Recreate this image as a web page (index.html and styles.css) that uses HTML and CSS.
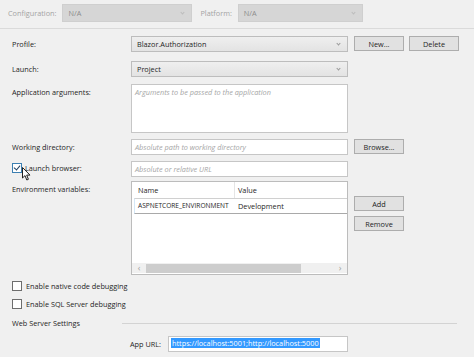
FILE: index.html
```html
<!DOCTYPE html>
<html lang="en">
<head>
    <meta charset="UTF-8">
    <title>Debug</title>
    <link rel="stylesheet" href="styles.css">
</head>
<body>
    <div class="top-bar">
        <span class="dim">Configuration:</span>
        <div class="select disabled config">N/A <span class="chev"></span></div>
        <span class="dim platform-label">Platform:</span>
        <div class="select disabled platform">N/A <span class="chev"></span></div>
    </div>
    <div class="sep"></div>

    <div class="form">
        <div class="row r-profile">
            <div class="label">Profile:</div>
            <div class="select field">Blazor.Authorization <span class="chev"></span></div>
            <button class="btn">New...</button>
            <button class="btn">Delete</button>
        </div>

        <div class="row r-launch">
            <div class="label">Launch:</div>
            <div class="select field">Project <span class="chev"></span></div>
        </div>

        <div class="row r-args">
            <div class="label">Application arguments:</div>
            <div class="input area"><span class="ph">Arguments to be passed to the application</span></div>
        </div>

        <div class="row r-dir">
            <div class="label">Working directory:</div>
            <div class="input"><span class="ph">Absolute path to working directory</span></div>
            <button class="btn">Browse...</button>
        </div>

        <div class="row r-browser">
            <div class="label check-label">
                <span class="box checked"></span>
                <span>Launch browser:</span>
                <svg class="cursor" width="9" height="14" viewBox="0 0 9 14">
                    <path d="M0.5 0.5 L0.5 11 L3 8.6 L4.8 13 L6.4 12.3 L4.7 8.1 L8 8.1 Z" fill="#fff" stroke="#222" stroke-width="1"/>
                </svg>
            </div>
            <div class="input"><span class="ph">Absolute or relative URL</span></div>
        </div>

        <div class="row r-env">
            <div class="label">Environment variables:</div>
            <div class="table">
                <div class="thead">
                    <div class="c1">Name</div>
                    <div class="c2">Value</div>
                </div>
                <div class="trow">
                    <div class="c1">ASPNETCORE_ENVIRONMENT</div>
                    <div class="c2">Development</div>
                </div>
                <div class="tbody-space"></div>
                <div class="hscroll">
                    <span class="arrow">&lsaquo;</span>
                    <span class="thumb"></span>
                    <span class="arrow right">&rsaquo;</span>
                </div>
            </div>
            <div class="side-btns">
                <button class="btn">Add</button>
                <button class="btn">Remove</button>
            </div>
        </div>

        <div class="check-row first">
            <span class="box"></span> Enable native code debugging
        </div>
        <div class="check-row">
            <span class="box"></span> Enable SQL Server debugging
        </div>

        <div class="group">
            <span>Web Server Settings</span>
            <span class="group-line"></span>
        </div>

        <div class="url-row">
            <span class="url-label">App URL:</span>
            <div class="input url"><span class="sel">https://localhost:5001;http://localhost:5000</span></div>
        </div>
    </div>
</body>
</html>
```

FILE: styles.css
```css
body {
    margin: 0;
    background-color: #f0f0f0;
    font-family: "Open Sans", "Noto Sans", sans-serif;
    font-size: 7.3px;
    color: #1e1e1e;
    width: 474px;
    height: 357px;
    overflow: hidden;
}

/* barra de cima (desabilitada) */
.top-bar {
    display: flex;
    align-items: center;
    height: 18px;
    padding: 4px 0 0 8px;
}

.dim {
    color: #a3a3a3;
}

.platform-label {
    margin-left: 8px;
}

.select {
    position: relative;
    box-sizing: border-box;
    height: 16px;
    line-height: 14px;
    padding-left: 5px;
    border: 1px solid #bdbdbd;
    background: linear-gradient(#efefef, #e3e3e3);
}

.select.disabled {
    height: 18px;
    line-height: 16px;
    background: #d6d6d6;
    border-color: #cfcfcf;
    color: #8c8c8c;
}

.config {
    width: 130px;
    margin-left: 6px;
}

.platform {
    width: 125px;
    margin-left: 6px;
}

.chev {
    position: absolute;
    right: 7px;
    top: 5px;
    width: 2px;
    height: 2px;
    border-right: 1px solid #9a9a9a;
    border-bottom: 1px solid #9a9a9a;
    transform: rotate(45deg);
}

.disabled .chev {
    top: 6px;
    border-color: #bcbcbc;
}

.sep {
    height: 1px;
    background: #dadada;
    margin-top: 6px;
}

/* formulario */
.form {
    padding-left: 12px;
}

.row {
    display: flex;
    align-items: flex-start;
}

.label {
    width: 119px;
    flex: none;
    line-height: 16px;
}

.field,
.input {
    width: 217px;
    flex: none;
}

.input {
    box-sizing: border-box;
    height: 16px;
    line-height: 14px;
    padding-left: 3px;
    background: #fff;
    border: 1px solid #c6c6c6;
}

.input.area {
    height: 49px;
}

.ph {
    color: #a6a6a6;
    font-style: italic;
}

.btn {
    box-sizing: border-box;
    width: 50px;
    height: 15px;
    margin-left: 5px;
    padding: 0;
    font-family: inherit;
    font-size: inherit;
    color: #1e1e1e;
    background: #e1e1e1;
    border: 1px solid #adadad;
}

.row .field + .btn,
.row .input + .btn {
    margin-left: 6px;
}

.r-profile { margin-top: 7px; }
.r-launch { margin-top: 9px; }
.r-args { margin-top: 7px; }
.r-dir { margin-top: 6px; }
.r-browser { margin-top: 6px; }
.r-env { margin-top: 4px; }

/* checkbox */
.box {
    display: inline-block;
    box-sizing: border-box;
    width: 10px;
    height: 10px;
    background: #fff;
    border: 1px solid #6d6d6d;
    vertical-align: middle;
    position: relative;
    flex: none;
}

.box.checked {
    border-color: #3c7fb1;
}

.box.checked::after {
    content: "";
    position: absolute;
    left: 2px;
    top: 0px;
    width: 3px;
    height: 5px;
    border-right: 1.5px solid #1e3f62;
    border-bottom: 1.5px solid #1e3f62;
    transform: rotate(40deg);
}

.check-label {
    display: flex;
    align-items: center;
    gap: 3px;
    position: relative;
    margin-top: -1px;
}

.cursor {
    position: absolute;
    left: 10px;
    top: 7px;
}

/* tabela de variaveis */
.table {
    box-sizing: border-box;
    width: 217px;
    height: 94px;
    flex: none;
    display: flex;
    flex-direction: column;
    background: #fff;
    border: 1px solid #bcbcbc;
}

.thead,
.trow {
    display: flex;
    height: 16px;
    line-height: 16px;
    flex: none;
}

.thead .c1 {
    border-right: 1px solid #e5e5e5;
}

.trow {
    height: 14px;
    line-height: 14px;
    margin-left: 2px;
    border-left: 1px solid #d5e8f7;
    border-top: 1px solid #d0d0d0;
    border-bottom: 1px solid #a9a9a9;
}

.c1 {
    box-sizing: border-box;
    width: 103px;
    padding-left: 6px;
    flex: none;
}

.trow .c1 {
    width: 100px;
    padding-left: 3px;
    font-size: 6.6px;
}

.c2 {
    padding-left: 3px;
}

.tbody-space {
    flex: 1;
}

.hscroll {
    display: flex;
    align-items: center;
    height: 10px;
    background: #f0f0f0;
    color: #a0a0a0;
    font-size: 9px;
    margin-bottom: 1px;
}

.arrow {
    width: 14px;
    text-align: center;
    line-height: 10px;
}

.thumb {
    width: 155px;
    height: 9px;
    background: #cdcdcd;
}

.arrow.right {
    margin-left: auto;
}

.side-btns {
    display: flex;
    flex-direction: column;
    gap: 5px;
    padding-top: 15px;
    margin-left: 1px;
}

.check-row {
    display: flex;
    align-items: center;
    gap: 4px;
    height: 18px;
}

.check-row.first {
    margin-top: 2px;
}

.group {
    display: flex;
    align-items: center;
    margin-top: 1px;
    height: 18px;
}

.group-line {
    width: 335px;
    height: 1px;
    margin-left: 42px;
    background: #d3d3d3;
}

.url-row {
    display: flex;
    align-items: center;
    margin-top: 4px;
    padding-left: 118px;
}

.url-label {
    width: 38px;
}

.input.url {
    width: 180px;
    line-height: 12px;
    padding-left: 2px;
}

.sel {
    background: #3399ff;
    color: #fff;
    padding: 0 1px;
}
```
